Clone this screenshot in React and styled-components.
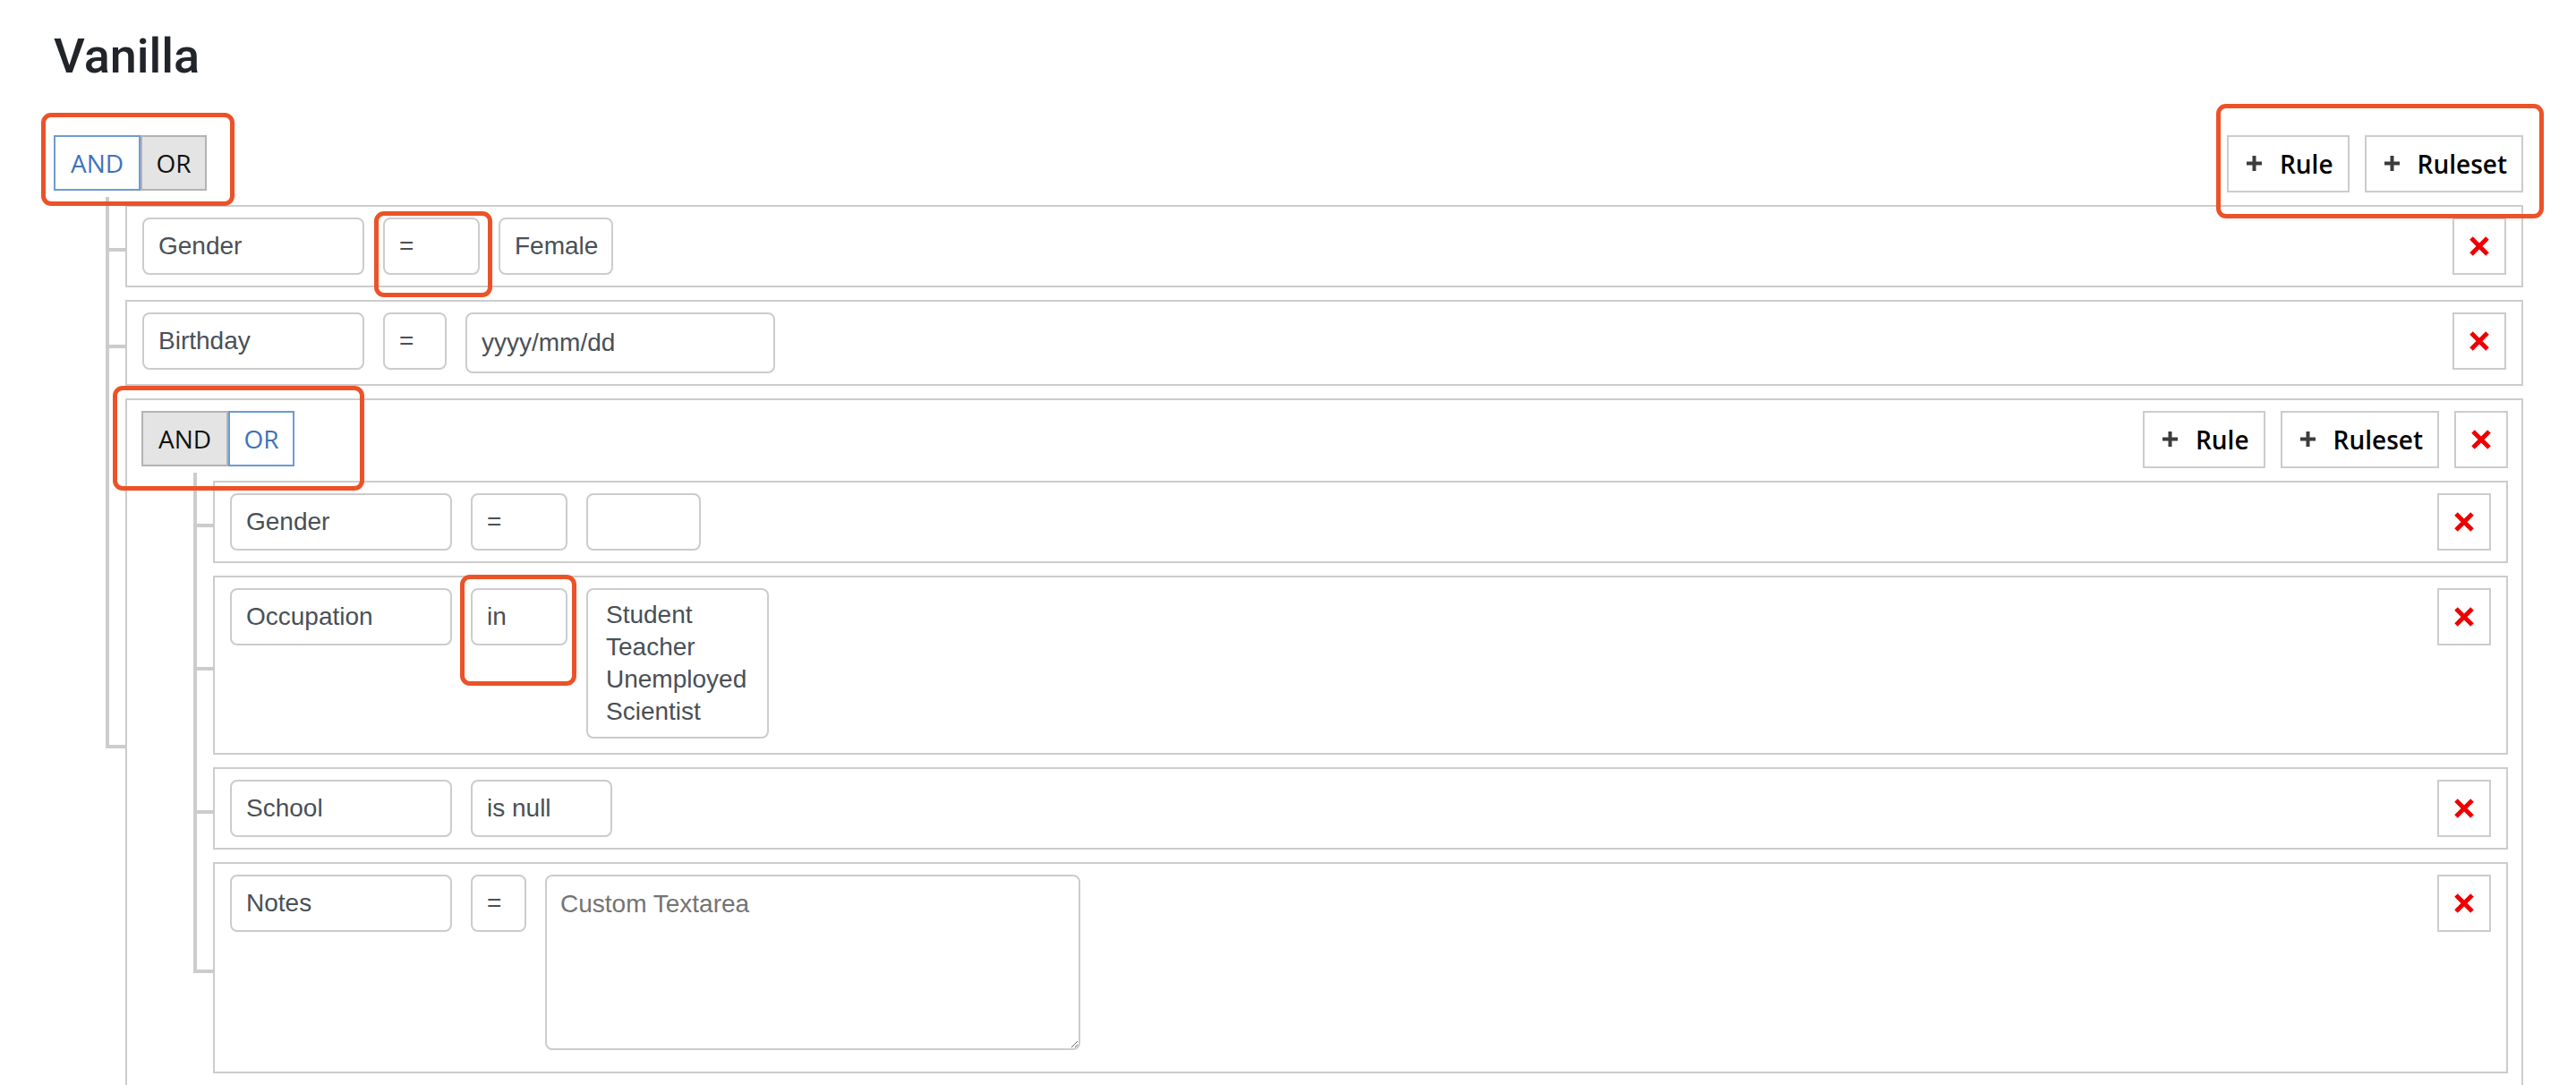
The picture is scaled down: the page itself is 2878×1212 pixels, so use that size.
import React from 'react';
import styled, { createGlobalStyle } from 'styled-components';

const GlobalStyle = createGlobalStyle`
    * {
        box-sizing: border-box;
    }
    body {
        margin: 0;
        background: #fff;
        font-family: "Liberation Sans", Arial, sans-serif;
    }
`;

const Page = styled.div`
    padding: 0 59px 0 60px;
`;

const Title = styled.h2`
    margin: 31px 0 55px;
    font-family: Roboto, "Liberation Sans", sans-serif;
    font-weight: 500;
    font-size: 54px;
    line-height: 1.2;
    color: #212529;
`;

const Group = styled.div`
    position: relative;
    ${p => p.$nested && `
        border: 2px solid #ccc;
        padding: 12px 15px 14px 16px;
    `}
`;

const GroupHeader = styled.div`
    display: flex;
    justify-content: space-between;
    align-items: flex-start;
`;

const Conditions = styled.div`
    position: relative;
    display: inline-flex;
`;

const ConditionButton = styled.div`
    width: ${p => p.$w}px;
    height: 62px;
    display: flex;
    align-items: center;
    justify-content: center;
    font-family: "Open Sans", sans-serif;
    font-size: 28px;
    border: 2px solid ${p => (p.$active ? '#6c9bd2' : '#b3b3b3')};
    background: ${p => (p.$active ? '#fff' : '#e4e4e4')};
    color: ${p => (p.$active ? '#3f73b9' : '#111')};
`;

const Actions = styled.div`
    position: relative;
    display: flex;
    gap: 17px;
`;

const ActionButton = styled.div`
    height: 64px;
    padding: 0 16px 0 20px;
    display: flex;
    align-items: center;
    gap: 20px;
    border: 2px solid #ccc;
    background: #fff;
    font-family: "Open Sans", sans-serif;
    font-weight: 600;
    font-size: 28px;
    color: #000;
`;

const DeleteButton = styled.div`
    flex: none;
    width: 60px;
    height: 64px;
    margin-left: ${p => (p.$push ? 'auto' : '0')};
    display: flex;
    align-items: center;
    justify-content: center;
    border: 2px solid #ccc;
    background: #fff;
`;

const Children = styled.div`
    margin-top: 14px;
    padding-left: 80px;
    display: flex;
    flex-direction: column;
    gap: 14px;
`;

const TreeItem = styled.div`
    position: relative;

    &::before {
        content: '';
        position: absolute;
        left: -22px;
        top: -14px;
        width: 18px;
        height: calc(50% + 16px);
        border-left: 4px solid #ccc;
        border-bottom: 4px solid #ccc;
    }
    &::after {
        content: '';
        position: absolute;
        left: -22px;
        top: calc(50% + 2px);
        height: calc(50% - 2px);
        border-left: 4px solid #ccc;
    }
    &:first-child::before {
        top: -9px;
        height: calc(50% + 11px);
    }
    &:last-child::after {
        display: none;
    }
`;

const RuleBox = styled.div`
    display: flex;
    align-items: flex-start;
    gap: 21px;
    border: 2px solid #ccc;
    padding: 12px 17px;
    background: #fff;
`;

const Field = styled.div`
    position: relative;
    flex: none;
    width: ${p => p.$w}px;
    height: ${p => p.$h || 64}px;
    padding: 0 16px;
    display: flex;
    align-items: center;
    border: 2px solid #ccc;
    border-radius: 8px;
    background: #fff;
    font-size: 28px;
    color: #495057;
    white-space: nowrap;
`;

const MultiSelect = styled.div`
    flex: none;
    width: 204px;
    margin-bottom: 4px;
    padding: 10px 20px;
    border: 2px solid #ccc;
    border-radius: 8px;
    font-size: 28px;
    line-height: 36px;
    color: #495057;
`;

const TextArea = styled.textarea`
    flex: none;
    width: 598px;
    height: 196px;
    margin: 0 0 12px;
    padding: 10px 15px;
    border: 2px solid #ccc;
    border-radius: 8px;
    font-family: "Liberation Sans", Arial, sans-serif;
    font-size: 28px;
    line-height: 1.5;
    color: #495057;
    outline: none;

    &::placeholder {
        color: #747474;
    }
`;

const Highlight = styled.div`
    position: absolute;
    top: ${p => p.$t}px;
    right: ${p => p.$r}px;
    bottom: ${p => p.$b}px;
    left: ${p => p.$l}px;
    border: 5px solid #ec5228;
    border-radius: 11px;
    pointer-events: none;
    z-index: 2;
`;

const PlusIcon = () => (
    <svg width="17" height="17" viewBox="0 0 17 17">
        <path d="M8.5 0v17M0 8.5h17" stroke="#3c3c3c" strokeWidth="4" />
    </svg>
);

const CrossIcon = () => (
    <svg width="24" height="24" viewBox="0 0 24 24">
        <path d="M3 3L21 21M21 3L3 21" stroke="#ee0000" strokeWidth="5" />
    </svg>
);

const Header = ({ active, removable, mark, actionsMark }) => (
    <GroupHeader>
        <Conditions>
            <ConditionButton $w={97} $active={active === 'AND'}>AND</ConditionButton>
            <ConditionButton $w={74} $active={active === 'OR'}>OR</ConditionButton>
            {mark && <Highlight {...mark} />}
        </Conditions>
        <Actions>
            <ActionButton><PlusIcon />Rule</ActionButton>
            <ActionButton><PlusIcon />Ruleset</ActionButton>
            {removable && <DeleteButton><CrossIcon /></DeleteButton>}
            {actionsMark && <Highlight {...actionsMark} />}
        </Actions>
    </GroupHeader>
);

const Rule = ({ children }) => (
    <TreeItem>
        <RuleBox>
            {children}
            <DeleteButton $push><CrossIcon /></DeleteButton>
        </RuleBox>
    </TreeItem>
);

const App = () => (
    <Page>
        <GlobalStyle />
        <Title>Vanilla</Title>
        <Group>
            <Header
                active="AND"
                mark={{ $t: -25, $r: -31, $b: -17, $l: -14 }}
                actionsMark={{ $t: -35, $r: -23, $b: -29, $l: -12 }}
            />
            <Children>
                <Rule>
                    <Field $w={248}>Gender</Field>
                    <Field $w={108}>
                        =
                        <Highlight $t={-9} $r={-16} $b={-27} $l={-12} />
                    </Field>
                    <Field $w={128}>Female</Field>
                </Rule>
                <Rule>
                    <Field $w={248}>Birthday</Field>
                    <Field $w={71}>=</Field>
                    <Field $w={346} $h={68}>yyyy/mm/dd</Field>
                </Rule>
                <TreeItem>
                    <Group $nested>
                        <Header
                            active="OR"
                            removable
                            mark={{ $t: -28, $r: -78, $b: -27, $l: -32 }}
                        />
                        <Children>
                            <Rule>
                                <Field $w={248}>Gender</Field>
                                <Field $w={108}>=</Field>
                                <Field $w={128} />
                            </Rule>
                            <Rule>
                                <Field $w={248}>Occupation</Field>
                                <Field $w={108}>
                                    in
                                    <Highlight $t={-17} $r={-12} $b={-47} $l={-14} />
                                </Field>
                                <MultiSelect>
                                    <div>Student</div>
                                    <div>Teacher</div>
                                    <div>Unemployed</div>
                                    <div>Scientist</div>
                                </MultiSelect>
                            </Rule>
                            <Rule>
                                <Field $w={248}>School</Field>
                                <Field $w={158}>is null</Field>
                            </Rule>
                            <Rule>
                                <Field $w={248}>Notes</Field>
                                <Field $w={62}>=</Field>
                                <TextArea placeholder="Custom Textarea" />
                            </Rule>
                        </Children>
                    </Group>
                </TreeItem>
            </Children>
        </Group>
    </Page>
);

export default App;
